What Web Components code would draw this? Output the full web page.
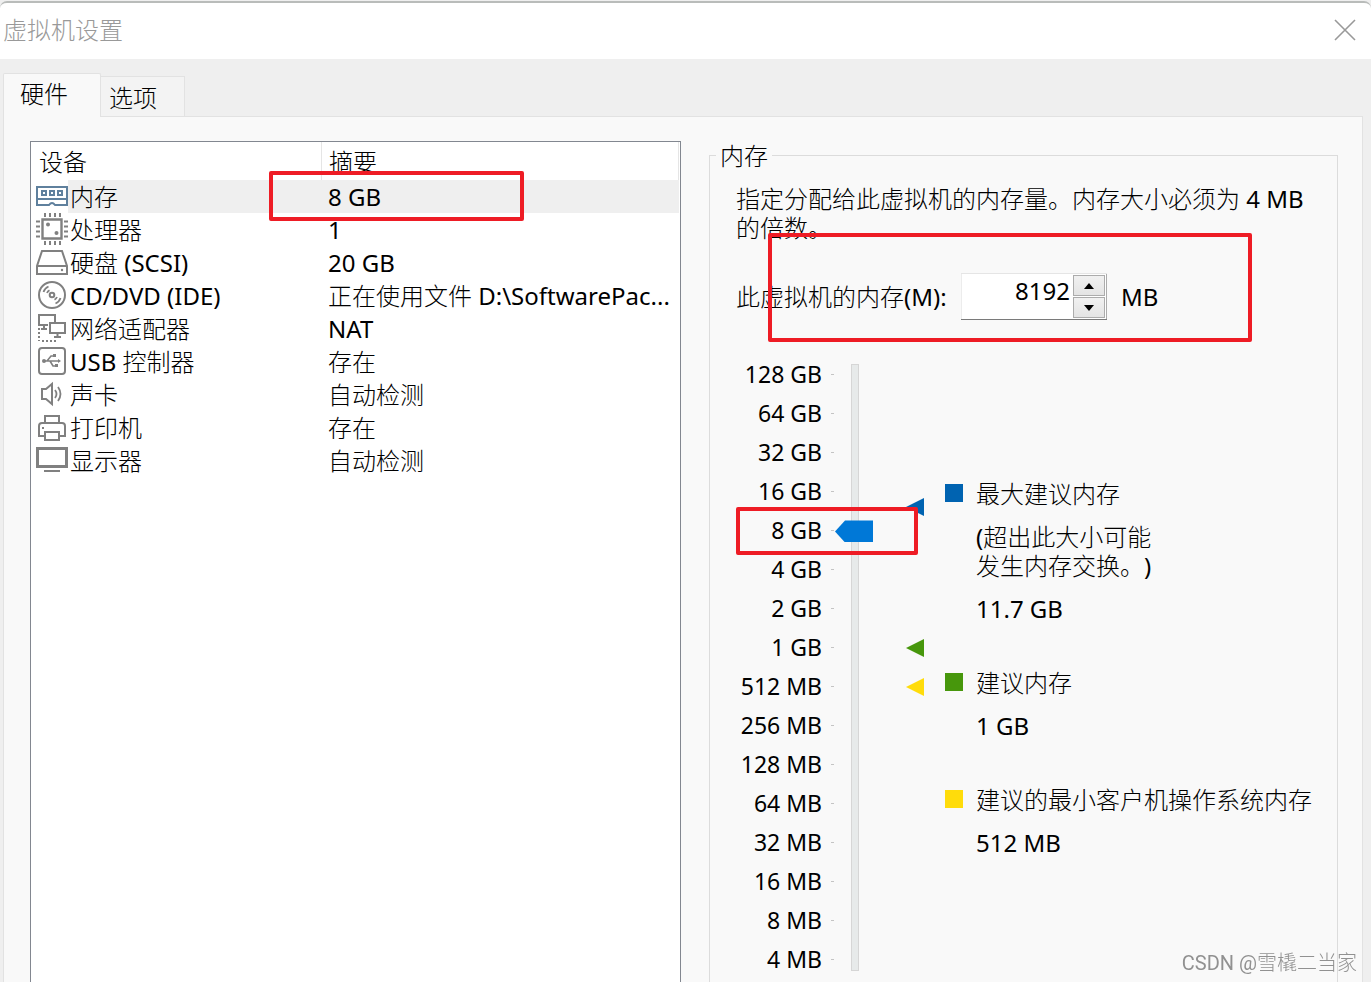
<!DOCTYPE html>
<html lang="zh-CN">
<head>
<meta charset="utf-8">
<title>虚拟机设置</title>
<style>
    body {
        margin: 0;
        height: 100vh;
        overflow: hidden;
        background: #efefef;
        color: #000;
        font: 24px/29px "Noto Sans", "Noto Sans CJK SC Light", "Noto Sans CJK SC", sans-serif;
        text-spacing-trim: space-all;
    }
</style>
</head>
<body>
<settings-window heading="虚拟机设置">
    <tab-strip slot="tabs"></tab-strip>
    <device-list></device-list>
    <group-box label="内存">
        <memory-panel></memory-panel>
    </group-box>
</settings-window>
<water-mark>CSDN @雪橇二当家</water-mark>

<script>
const createTemplate = (html) => {
    const template = document.createElement("template")
    template.innerHTML = html
    return template
}

class BaseElement extends HTMLElement {
    constructor() {
        super()
        const shadow = this.attachShadow({mode: "open"})
        shadow.append(this.constructor.template.content.cloneNode(true))
    }
}

// window frame with title bar

class SettingsWindow extends BaseElement {
    static template = createTemplate(`
        <style>
            :host {
                display: flex;
                flex-direction: column;
                height: 100%;
                box-sizing: border-box;
                padding-top: 1px;
            }
            header {
                display: flex;
                align-items: center;
                justify-content: space-between;
                height: 53px;
                padding: 0 14px 3px 3px;
                border-top: 2px solid #b9bcba;
                border-radius: 7px 7px 0 0;
                background: #fff;
                color: #999;
            }
            h1 {
                margin: 0;
                font: inherit;
            }
            button {
                display: flex;
                padding: 0;
                border: 0;
                background: none;
                color: #999;
            }
            main {
                flex: 1;
                display: flex;
                flex-direction: column;
                min-height: 0;
                padding: 14px 8px 0 3px;
            }
            .panel {
                flex: 1;
                display: grid;
                grid-template-columns: minmax(0, 651fr) minmax(0, 629fr);
                gap: 28px;
                min-height: 0;
                padding: 24px 24px 0 26px;
                border: 1px solid #e2e2e2;
                border-bottom: 0;
                background: #f9f9f9;
            }
        </style>
        <header>
            <h1></h1>
            <button aria-label="关闭">
                <svg width="24" height="24" viewBox="0 0 24 24" fill="none" stroke="currentColor" stroke-width="1.6"><path d="M2 2l20 20M22 2L2 22"/></svg>
            </button>
        </header>
        <main>
            <slot name="tabs"></slot>
            <div class="panel"><slot></slot></div>
        </main>
    `)

    connectedCallback() {
        this.shadowRoot.querySelector("h1").textContent = this.getAttribute("heading")
    }
}

class TabStrip extends BaseElement {
    static template = createTemplate(`
        <style>
            :host {
                display: flex;
                align-items: flex-end;
                z-index: 1;
            }
            button {
                height: 40px;
                padding: 2px 27px 0 8px;
                border: 1px solid #e2e2e2;
                border-width: 1px 1px 0 0;
                background: #f3f3f3;
                color: inherit;
                font: inherit;
            }
            button[aria-selected="true"] {
                height: 44px;
                margin-bottom: -1px;
                padding: 0 32px 4px 16px;
                border-left-width: 1px;
                border-radius: 2px 2px 0 0;
                background: #f9f9f9;
            }
        </style>
        <button role="tab" aria-selected="true">硬件</button>
        <button role="tab" aria-selected="false">选项</button>
    `)

    connectedCallback() {
        this.setAttribute("role", "tablist")
    }
}

// red frame laid over its positioned parent, inset by the user

class MarkFrame extends BaseElement {
    static template = createTemplate(`
        <style>
            :host {
                position: absolute;
                z-index: 2;
                box-sizing: border-box;
                border: 4px solid #ee1c25;
                border-radius: 2px;
                pointer-events: none;
            }
        </style>
    `)
}

const ICONS = {
    memory: `<g fill="none" stroke="#5f809d" stroke-width="2"><path d="M1 7h30v18H19q-3-4-6 0H1zM1 19h30"/><path d="M6 11h4v4H6zM14 11h4v4h-4zM22 11h4v4h-4z"/></g>`,
    cpu: `<path d="M6.500 6.500h19v19h-19z" fill="none" stroke="#808080" stroke-width="2.400"/>
        <path d="M9 0v4M14 0v4M19 0v4M24 0v4M9 28v4M14 28v4M19 28v4M24 28v4M0 8.500h4M0 13.500h4M0 18.500h4M0 23.500h4M28 8.500h4M28 13.500h4M28 18.500h4M28 23.500h4" stroke="#808080" stroke-width="2"/>
        <circle cx="12" cy="11.500" r="2" fill="#808080"/><circle cx="20.500" cy="20" r="2" fill="#808080"/>`,
    disk: `<path d="M6 5h20l5 15v8H1v-8zM1 20h30" fill="none" stroke="#808080" stroke-width="2"/><circle cx="26" cy="24" r="1.200" fill="#808080"/>`,
    cd: `<g fill="none" stroke="#808080" stroke-width="2"><circle cx="16" cy="16" r="13"/><circle cx="16" cy="16" r="2.300"/><path d="M7.500 13a9 9 0 0 1 5-5.500M11 14a5.500 5.500 0 0 1 2.500-2.700M24.500 19a9 9 0 0 1-5 5.500M21 18a5.500 5.500 0 0 1-2.500 2.700" stroke-width="1.800"/></g>`,
    network: `<g fill="none" stroke="#808080" stroke-width="2"><path d="M12 13H3V3h16v7M8 13v4M5 17h6"/><path d="M14 11h15v10H14zM21.500 21v4M18 25h7"/><path d="M3 16v13M6 29h14" stroke-dasharray="2 2"/></g>`,
    usb: `<g fill="none" stroke="#808080"><rect x="3" y="3" width="26" height="26" rx="3" stroke-width="2"/><path d="M8 16h15M11 16l4-5h3M14 16l3 5h3" stroke-width="1.600"/></g><path d="M22 14l3 2-3 2zM17 9h3v3h-3zM19 19h3v3h-3z" fill="#808080"/><circle cx="8" cy="16" r="2" fill="#808080"/>`,
    sound: `<g fill="none" stroke="#808080" stroke-width="2"><path d="M6 11h4l6-5v20l-6-5H6z"/><path d="M19 12q3 4 0 8M22 9q5 7 0 14" stroke-width="1.800"/></g>`,
    printer: `<g fill="none" stroke="#808080" stroke-width="2"><path d="M9 12V5h14v7M9 25H3V15q0-3 3-3h20q3 0 3 3v10h-6M9 21h14v8H9z"/></g><path d="M6 16h2v2H6z" fill="#808080"/>`,
    display: `<path d="M1.500 4.500h29v18h-29z" fill="none" stroke="#808080" stroke-width="3"/><path d="M8 27h16" stroke="#808080" stroke-width="2"/>`
}

const DEVICES = [
    {icon: "memory", name: "内存", summary: "8 GB", selected: true},
    {icon: "cpu", name: "处理器", summary: "1"},
    {icon: "disk", name: "硬盘 (SCSI)", summary: "20 GB"},
    {icon: "cd", name: "CD/DVD (IDE)", summary: "正在使用文件 D:\\SoftwarePac..."},
    {icon: "network", name: "网络适配器", summary: "NAT"},
    {icon: "usb", name: "USB 控制器", summary: "存在"},
    {icon: "sound", name: "声卡", summary: "自动检测"},
    {icon: "printer", name: "打印机", summary: "存在"},
    {icon: "display", name: "显示器", summary: "自动检测"}
]

class DeviceList extends BaseElement {
    static template = createTemplate(`
        <style>
            :host {
                display: block;
                border: 1px solid #828790;
                border-bottom: 0;
                background: #fff;
            }
            table {
                width: 100%;
                padding-right: 1px;
                border-spacing: 0;
                table-layout: fixed;
            }
            th {
                height: 38px;
                box-sizing: border-box;
                padding: 0 0 0 7px;
                border-right: 1px solid #e5e5e5;
                font-weight: inherit;
                text-align: left;
            }
            th:first-child {
                width: 291px;
                padding-left: 8px;
            }
            td {
                position: relative;
                height: 33px;
                padding: 0;
                white-space: nowrap;
            }
            td + td {
                padding-left: 6px;
            }
            .device {
                display: flex;
                padding-left: 5px;
            }
            .device span {
                flex: 1;
                padding-left: 2px;
                line-height: 33px;
            }
            svg {
                flex: none;
            }
            .selected span, .selected td + td {
                background: #efefef;
            }
            mark-frame {
                inset: -9px 155px -8px -53px;
            }
        </style>
        <table>
            <thead><tr><th>设备</th><th>摘要</th></tr></thead>
            <tbody></tbody>
        </table>
    `)

    connectedCallback() {
        this.shadowRoot.querySelector("tbody").innerHTML = DEVICES.map((device) => `
            <tr class="${device.selected ? "selected" : ""}">
                <td><div class="device"><svg width="32" height="33" viewBox="0 0 32 33">${ICONS[device.icon]}</svg><span>${device.name}</span></div></td>
                <td>${device.summary}${device.selected ? "<mark-frame></mark-frame>" : ""}</td>
            </tr>
        `).join("")
    }
}

class GroupBox extends BaseElement {
    static template = createTemplate(`
        <style>
            :host {
                display: block;
            }
            fieldset {
                height: 100%;
                box-sizing: border-box;
                min-width: 0;
                margin: 0;
                padding: 14px 16px 0 26px;
                border: 1px solid #dcdcdc;
                border-bottom: 0;
            }
            legend {
                margin-left: -20px;
                padding: 0 4px;
            }
        </style>
        <fieldset>
            <legend></legend>
            <slot></slot>
        </fieldset>
    `)

    connectedCallback() {
        this.shadowRoot.querySelector("legend").textContent = this.getAttribute("label")
    }
}

class MemoryPanel extends BaseElement {
    static template = createTemplate(`
        <style>
            :host {
                display: block;
            }
            p {
                margin: 0 0 31px;
            }
            .amount {
                position: relative;
                display: flex;
                align-items: center;
                gap: 14px;
                margin-bottom: 35px;
            }
            label {
                min-width: 211px;
            }
            .amount mark-frame {
                inset: -40px 69px -22px 32px;
            }
            .spin {
                display: flex;
                width: 146px;
                height: 47px;
                box-sizing: border-box;
                border-top: 1px solid #e5e5e5;
                border-bottom: 1px solid #7a7a7a;
                background: #fff;
            }
            .spin input {
                flex: 1;
                min-width: 0;
                padding: 0 2px 12px 0;
                border: 0;
                border-left: 1px solid #ececec;
                background: none;
                font: inherit;
                text-align: right;
                appearance: textfield;
            }
            .spin input::-webkit-inner-spin-button {
                display: none;
            }
            .arrows {
                display: grid;
                gap: 1px;
                width: 32px;
                padding: 1px;
                border-right: 1px solid #acacac;
            }
            .arrows button {
                display: grid;
                place-items: center;
                min-height: 0;
                padding: 0;
                border: 1px solid #acacac;
                background: linear-gradient(#f1f1f1, #e4e4e4);
            }
            .tuning {
                display: flex;
            }
        </style>
        <p>指定分配给此虚拟机的内存量。内存大小必须为 4 MB 的倍数。</p>
        <div class="amount">
            <label for="amount">此虚拟机的内存(M):</label>
            <div class="spin">
                <input id="amount" type="number" value="8192" min="4" step="4">
                <div class="arrows">
                    <button aria-label="增加"><svg width="10" height="6"><path d="M0 6l5-6 5 6z"/></svg></button>
                    <button aria-label="减少"><svg width="10" height="6"><path d="M0 0l5 6 5-6z"/></svg></button>
                </div>
            </div>
            <span>MB</span>
            <mark-frame></mark-frame>
        </div>
        <div class="tuning">
            <memory-scale></memory-scale>
            <memory-legend></memory-legend>
        </div>
    `)

    connectedCallback() {
        const input = this.shadowRoot.querySelector("input")
        const [up, down] = this.shadowRoot.querySelectorAll("button")
        up.addEventListener("click", () => input.stepUp())
        down.addEventListener("click", () => input.stepDown())
    }
}

const SIZES = [
    "128 GB", "64 GB", "32 GB", "16 GB", "8 GB", "4 GB", "2 GB", "1 GB",
    "512 MB", "256 MB", "128 MB", "64 MB", "32 MB", "16 MB", "8 MB", "4 MB"
]

class MemoryScale extends BaseElement {
    static template = createTemplate(`
        <style>
            :host {
                position: relative;
                display: flex;
                flex: none;
                width: 209px;
            }
            ol {
                width: 98px;
                margin: 0;
                padding: 0;
                list-style: none;
                font-size: 23px;
            }
            li {
                position: relative;
                display: flex;
                align-items: center;
                justify-content: flex-end;
                gap: 9px;
                height: 39px;
            }
            li::after {
                content: "";
                width: 3px;
                height: 1px;
                background: #c4c4c4;
            }
            li mark-frame {
                inset: -4px -84px -5px 0;
            }
            /* 22px thumb, so 15 steps of 39px need 607px */
            input {
                appearance: none;
                writing-mode: vertical-lr;
                direction: rtl;
                width: 40px;
                height: 607px;
                margin: 9px 0 0 1px;
                background: none;
            }
            input::-webkit-slider-runnable-track {
                width: 8px;
                box-sizing: border-box;
                border: 1px solid #d6d6d6;
                background: #e7eaea;
            }
            input::-webkit-slider-thumb {
                appearance: none;
                width: 38px;
                height: 22px;
                margin-left: -17px;
                background: #0078d7;
                clip-path: polygon(0 50%, 10px 0, 100% 0, 100% 100%, 10px 100%);
            }
            .marker {
                position: absolute;
                left: 170px;
                width: 18px;
                height: 18px;
                clip-path: polygon(0 50%, 100% 0, 100% 100%);
            }
            .max { top: 143px; background: #0063b1; }
            .recommended { top: 284px; background: #47970c; }
            .min { top: 323px; background: #ffdc0b; }
        </style>
        <ol></ol>
        <input type="range" min="0" max="15" value="11" aria-label="内存">
        <i class="marker max"></i>
        <i class="marker recommended"></i>
        <i class="marker min"></i>
    `)

    connectedCallback() {
        this.shadowRoot.querySelector("ol").innerHTML = SIZES.map((size) =>
            `<li>${size}${size === "8 GB" ? "<mark-frame></mark-frame>" : ""}</li>`
        ).join("")
    }
}

class MemoryLegend extends BaseElement {
    static template = createTemplate(`
        <style>
            :host {
                display: block;
                padding-top: 124px;
                white-space: nowrap;
            }
            dl {
                display: grid;
                grid-template-columns: 18px auto;
                column-gap: 13px;
                row-gap: 14px;
                margin: 0 0 45px;
            }
            dt {
                display: contents;
            }
            dt::before {
                content: "";
                height: 18px;
                margin-top: 5px;
                background: var(--swatch);
            }
            dd {
                grid-column: 2;
                max-width: 186px;
                margin: 0;
                white-space: normal;
            }
        </style>
        <dl style="--swatch: #0063b1">
            <dt>最大建议内存</dt>
            <dd>(超出此大小可能发生内存交换。)</dd>
            <dd>11.7 GB</dd>
        </dl>
        <dl style="--swatch: #47970c">
            <dt>建议内存</dt>
            <dd>1 GB</dd>
        </dl>
        <dl style="--swatch: #ffdc0b">
            <dt>建议的最小客户机操作系统内存</dt>
            <dd>512 MB</dd>
        </dl>
    `)
}

class WaterMark extends BaseElement {
    static template = createTemplate(`
        <style>
            :host {
                position: fixed;
                right: 14px;
                bottom: 4px;
                color: #919191;
                font-family: Roboto, "Noto Sans CJK SC Light", "Noto Sans CJK SC", sans-serif;
                font-size: 20px;
            }
        </style>
        <slot></slot>
    `)
}

customElements.define("mark-frame", MarkFrame)
customElements.define("memory-scale", MemoryScale)
customElements.define("memory-legend", MemoryLegend)
customElements.define("memory-panel", MemoryPanel)
customElements.define("group-box", GroupBox)
customElements.define("device-list", DeviceList)
customElements.define("tab-strip", TabStrip)
customElements.define("settings-window", SettingsWindow)
customElements.define("water-mark", WaterMark)
</script>
</body>
</html>
